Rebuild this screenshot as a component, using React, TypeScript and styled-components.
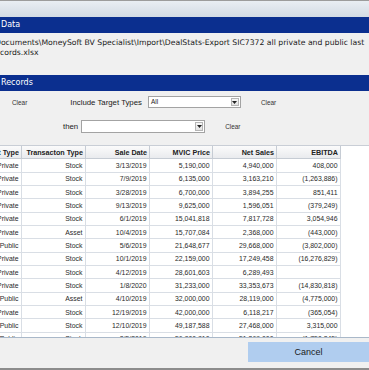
import React from 'react'
import styled, { createGlobalStyle } from 'styled-components'

const GlobalStyle = createGlobalStyle`
  html, body {
    margin: 0;
    padding: 0;
    background: #f0f0f0;
  }
  body {
    font-family: "Liberation Sans", Arial, sans-serif;
    color: #1e1e1e;
  }
`

type Row = [string, string, string, string, string, string]

const columns = [
  { title: 'Target Type', width: 22 },
  { title: 'Transacton Type', width: 64 },
  { title: 'Sale Date', width: 64 },
  { title: 'MVIC Price', width: 63 },
  { title: 'Net Sales', width: 64 },
  { title: 'EBITDA', width: 64 },
]

const rows: Row[] = [
  ['Private', 'Stock', '3/13/2019', '5,190,000', '4,940,000', '408,000'],
  ['Private', 'Stock', '7/9/2019', '6,135,000', '3,163,210', '(1,263,886)'],
  ['Private', 'Stock', '3/28/2019', '6,700,000', '3,894,255', '851,411'],
  ['Private', 'Stock', '9/13/2019', '9,625,000', '1,596,051', '(379,249)'],
  ['Private', 'Stock', '6/1/2019', '15,041,818', '7,817,728', '3,054,946'],
  ['Private', 'Asset', '10/4/2019', '15,707,084', '2,368,000', '(443,000)'],
  ['Public', 'Stock', '5/6/2019', '21,648,677', '29,668,000', '(3,802,000)'],
  ['Private', 'Stock', '10/1/2019', '22,159,000', '17,249,458', '(16,276,829)'],
  ['Private', 'Stock', '4/12/2019', '28,601,603', '6,289,493', ''],
  ['Private', 'Stock', '1/8/2020', '31,233,000', '33,353,673', '(14,830,818)'],
  ['Public', 'Asset', '4/10/2019', '32,000,000', '28,119,000', '(4,775,000)'],
  ['Private', 'Stock', '12/19/2019', '42,000,000', '6,118,217', '(365,054)'],
  ['Public', 'Stock', '12/10/2019', '49,187,588', '27,468,000', '3,315,000'],
  ['Public', 'Stock', '2/5/2019', '56,800,810', '51,369,000', '(1,750,345)'],
]

const gridTemplate = columns.map((c) => `${c.width}px`).join(' ')

const Combo = ({ value, width, height }: { value: string; width: number; height: number }) => (
  <ComboBox $width={width} $height={height}>
    <ComboValue>{value}</ComboValue>
    <ComboButton>
      <svg width="5" height="3" viewBox="0 0 5 3">
        <path d="M0 0 H5 L2.5 3 Z" fill="#222" />
      </svg>
    </ComboButton>
  </ComboBox>
)

const App = () => {
  return (
    <>
      <GlobalStyle />
      <Window>
        <TitleBand />
        <SectionHeader>Data</SectionHeader>
        <PathArea>
          <PathLine $indent={-5}>
            Documents\MoneySoft BV Specialist\Import\DealStats-Export SIC7372 all private and public last
          </PathLine>
          <PathLine $indent={0}>cords.xlsx</PathLine>
        </PathArea>
        <SectionHeader>Records</SectionHeader>
        <Filters>
          <FilterRow $top={5} $left={12} $height={12}>
            <ClearLink $ml={0}>Clear</ClearLink>
            <FilterLabel $ml={43}>Include Target Types</FilterLabel>
            <ComboSlot $ml={6}>
              <Combo value="All" width={93} height={12} />
            </ComboSlot>
            <ClearLink $ml={20}>Clear</ClearLink>
          </FilterRow>
          <FilterRow $top={12} $left={63} $height={13}>
            <FilterLabel $ml={0}>then</FilterLabel>
            <ComboSlot $ml={3}>
              <Combo value="" width={124} height={13} />
            </ComboSlot>
            <ClearLink $ml={20}>Clear</ClearLink>
          </FilterRow>
        </Filters>
        <Grid>
          <GridRow>
            {columns.map((c) => (
              <HeaderCell key={c.title}>{c.title}</HeaderCell>
            ))}
          </GridRow>
          {rows.map((r, i) => (
            <GridRow key={i}>
              {r.map((v, j) => (
                <Cell key={j}>{v}</Cell>
              ))}
            </GridRow>
          ))}
        </Grid>
        <Footer>
          <CancelButton>Cancel</CancelButton>
        </Footer>
      </Window>
    </>
  )
}

const Window = styled.div`
  width: 369px;
  height: 370px;
  display: flex;
  flex-direction: column;
  overflow: hidden;
  background: #f0f0f0;
`

const TitleBand = styled.div`
  flex: 0 0 17px;
  box-sizing: border-box;
  border-top: 1px solid #9c9c9c;
  background: linear-gradient(#e9eef3, #d3dbe4);
`

const SectionHeader = styled.div`
  flex: 0 0 16px;
  background: #0b2f8f;
  color: #ffffff;
  font-family: "DejaVu Sans", sans-serif;
  font-size: 8px;
  line-height: 16px;
  padding-left: 1px;
  white-space: nowrap;
`

const PathArea = styled.div`
  flex: 0 0 42px;
  box-sizing: border-box;
  padding-top: 5px;
  overflow: hidden;
`

const PathLine = styled.div<{ $indent: number }>`
  margin-left: ${(p) => p.$indent}px;
  font-family: "DejaVu Sans", sans-serif;
  font-size: 7.7px;
  line-height: 10px;
  white-space: nowrap;
  color: #1a1a1a;
`

const Filters = styled.div`
  flex: 0 0 54px;
  box-sizing: border-box;
  display: flex;
  flex-direction: column;
`

const FilterRow = styled.div<{ $top: number; $left: number; $height: number }>`
  display: flex;
  align-items: center;
  height: ${(p) => p.$height}px;
  margin-top: ${(p) => p.$top}px;
  padding-left: ${(p) => p.$left}px;
`

const FilterLabel = styled.span<{ $ml: number }>`
  margin-left: ${(p) => p.$ml}px;
  font-size: 7.8px;
  color: #1a1a1a;
  white-space: nowrap;
`

const ClearLink = styled.span<{ $ml: number }>`
  margin-left: ${(p) => p.$ml}px;
  font-size: 6.4px;
  color: #333333;
  white-space: nowrap;
`

const ComboSlot = styled.div<{ $ml: number }>`
  margin-left: ${(p) => p.$ml}px;
  display: flex;
`

const ComboBox = styled.div<{ $width: number; $height: number }>`
  width: ${(p) => p.$width}px;
  height: ${(p) => p.$height}px;
  box-sizing: border-box;
  border: 1px solid #a3a3a3;
  background: #ffffff;
  display: flex;
  align-items: stretch;
`

const ComboValue = styled.div`
  flex: 1;
  font-size: 6.4px;
  line-height: 10px;
  padding-left: 2px;
  color: #1a1a1a;
`

const ComboButton = styled.div`
  width: 8px;
  margin: 1px;
  box-sizing: border-box;
  border: 1px solid #b5b5b5;
  background: linear-gradient(#f7f7f7, #e3e3e3);
  display: flex;
  align-items: center;
  justify-content: center;
`

const Grid = styled.div`
  flex: 1 1 auto;
  overflow: hidden;
  background: #ffffff;
  border-top: 1px solid #c9ced6;
  box-sizing: border-box;
`

const GridRow = styled.div`
  display: grid;
  grid-template-columns: ${gridTemplate};
  height: 13.33px;
`

const HeaderCell = styled.div`
  display: flex;
  align-items: center;
  justify-content: flex-end;
  overflow: hidden;
  white-space: nowrap;
  box-sizing: border-box;
  padding-right: 2px;
  border-right: 1px solid #c6ccd4;
  border-bottom: 1px solid #c6ccd4;
  background: linear-gradient(#fbfbfb, #e9ebee);
  font-size: 7.2px;
  font-weight: bold;
  color: #222222;
`

const Cell = styled.div`
  display: flex;
  align-items: center;
  justify-content: flex-end;
  overflow: hidden;
  white-space: nowrap;
  box-sizing: border-box;
  padding-right: 2.5px;
  border-right: 1px solid #d9dee5;
  border-bottom: 1px solid #d9dee5;
  font-size: 6.9px;
  color: #2a2a2a;
`

const Footer = styled.div`
  flex: 0 0 33px;
  box-sizing: border-box;
  border-top: 1px solid #a9b8c9;
  border-bottom: 2px solid #8c8c8c;
  display: flex;
  justify-content: flex-end;
  align-items: flex-start;
  padding-top: 4px;
`

const CancelButton = styled.div`
  width: 121px;
  height: 20px;
  background: #b0cdef;
  display: flex;
  align-items: center;
  justify-content: center;
  font-size: 9px;
  color: #1a1a1a;
`

export default App
